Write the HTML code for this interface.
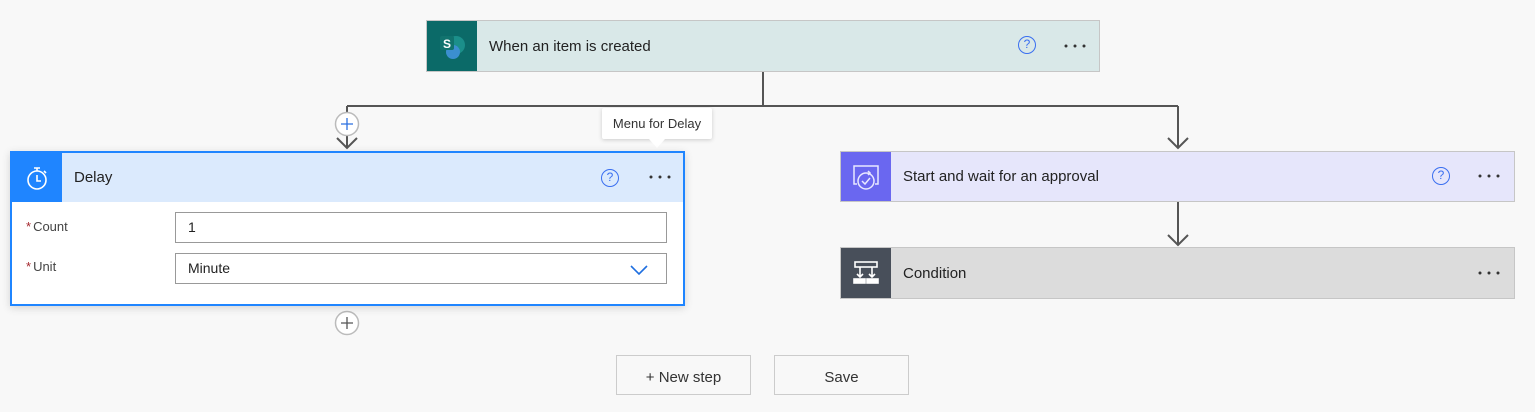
<!DOCTYPE html>
<html><head><meta charset="utf-8"><style>
*{box-sizing:border-box;margin:0;padding:0}
body{width:1535px;height:412px;background:#f8f8f8;font-family:"Segoe UI","Liberation Sans",sans-serif;position:relative;overflow:hidden;color:#222}
.card{position:absolute;display:flex;align-items:center}
.ico{width:50px;height:100%;display:flex;align-items:center;justify-content:center;flex:none}
.t{font-size:15px;margin-left:12px;flex:1}
.q{position:absolute;width:18px;height:18px;border:1.3px solid #3a6ff0;border-radius:50%;color:#3a6ff0;font-size:12px;text-align:center;line-height:15px}
.dots{position:absolute;width:24px;height:4px}
.inp{position:absolute;left:175px;width:492px;height:31px;border:1px solid #999;background:#fff;font-size:14px;padding-left:12px;line-height:29px}
.lbl{position:absolute;left:26px;font-size:13px;color:#444}
.lbl b{color:#a4262c;font-weight:normal;margin-right:2px}
.btn{position:absolute;top:355px;width:135px;height:40px;border:1px solid #ccc;background:#f8f8f8;font-size:15px;text-align:center;line-height:43px;color:#333}
</style></head><body>
<svg width="1535" height="412" style="position:absolute;left:0;top:0">
<g stroke="#555" stroke-width="2" fill="none">
<path d="M763 71V106M347 106H1178M347 106V148M1178 106V148M1178 201V245"/>
<path d="M337 138l10 10 10-10M1168 138l10 10 10-10M1168 235l10 10 10-10"/>
</g>
<circle cx="347" cy="124" r="11.5" fill="#fff" stroke="#bbb" stroke-width="1.5"/>
<path d="M341 124h12M347 118v12" stroke="#2b6fe0" stroke-width="1.3"/>
<circle cx="347" cy="323" r="11.5" fill="#fff" stroke="#bbb" stroke-width="1.5"/>
<path d="M341 323h12M347 317v12" stroke="#555" stroke-width="1.3"/>
</svg>

<div class="card" style="left:426px;top:20px;width:674px;height:52px;background:#d9e8e8;border:1px solid #c6c6c6">
<div class="ico" style="background:#0b6a68"><svg width="36" height="36" viewBox="0 0 36 36"><circle cx="22" cy="17" r="9" fill="#1b8f8a"/><circle cx="19" cy="24" r="7" fill="#3b8fd0"/><rect x="6" y="8" width="14" height="14" rx="2" fill="#11736e"/><text x="9" y="20" font-size="12" font-weight="bold" fill="#fff" font-family="Liberation Sans">S</text></svg></div>
<div class="t">When an item is created</div>
<div class="q" style="left:591px;top:15px">?</div>
<svg class="dots" style="left:636px;top:23px"><circle cx="3" cy="2" r="1.5" fill="#333"/><circle cx="12" cy="2" r="1.5" fill="#333"/><circle cx="21" cy="2" r="1.5" fill="#333"/></svg>
</div>

<div style="position:absolute;left:602px;top:108px;width:110px;height:31px;background:#fff;box-shadow:0 1px 4px rgba(0,0,0,.18);font-size:13px;color:#333;text-align:center;line-height:31px;border-radius:2px">Menu for Delay</div>
<div style="position:absolute;left:649px;top:139px;width:0;height:0;border-left:8px solid transparent;border-right:8px solid transparent;border-top:9px solid #fff"></div>

<div style="position:absolute;left:10px;top:151px;width:675px;height:155px;border:2px solid #1f85ff;background:#fff;box-shadow:0 2px 8px rgba(0,0,0,.15)">
<div class="card" style="left:0;top:0;width:671px;height:49px;background:#dbeafd">
<div class="ico" style="background:#1f85ff"><svg width="26" height="26" viewBox="0 0 26 26" fill="none" stroke="#fff" stroke-width="1.6"><circle cx="13" cy="15" r="9"/><path d="M10 3h6M13 3v3M13 10v6h4M20 6l2 2"/></svg></div>
<div class="t">Delay</div>
<div class="q" style="left:589px;top:16px">?</div>
<svg class="dots" style="left:636px;top:22px"><circle cx="3" cy="2" r="1.5" fill="#333"/><circle cx="12" cy="2" r="1.5" fill="#333"/><circle cx="21" cy="2" r="1.5" fill="#333"/></svg>
</div>
<div class="lbl" style="top:66px;left:14px"><b>*</b>Count</div>
<div class="inp" style="top:59px;left:163px">1</div>
<div class="lbl" style="top:106px;left:14px"><b>*</b>Unit</div>
<div class="inp" style="top:100px;left:163px">Minute<svg style="position:absolute;right:18px;top:11px" width="18" height="10"><path d="M1 1l8 8 8-8" stroke="#1f6fe0" stroke-width="1.6" fill="none"/></svg></div>
</div>

<div class="card" style="left:840px;top:151px;width:675px;height:51px;background:#e6e6fb;border:1px solid #c6c6c6">
<div class="ico" style="background:#6a67f0"><svg width="34" height="34" viewBox="0 0 34 34" fill="none" stroke="#e8e8ff" stroke-width="1.5"><path d="M8 24H5V6h24v18h-3"/><circle cx="17" cy="21" r="8"/><path d="M13 21l3 3 5-6"/><path d="M19 11l2 2-2 2"/></svg></div>
<div class="t">Start and wait for an approval</div>
<div class="q" style="left:591px;top:15px">?</div>
<svg class="dots" style="left:636px;top:22px"><circle cx="3" cy="2" r="1.5" fill="#333"/><circle cx="12" cy="2" r="1.5" fill="#333"/><circle cx="21" cy="2" r="1.5" fill="#333"/></svg>
</div>

<div class="card" style="left:840px;top:247px;width:675px;height:52px;background:#dcdcdc;border:1px solid #c6c6c6">
<div class="ico" style="background:#484f5a"><svg width="28" height="28" viewBox="0 0 28 28" fill="none" stroke="#fff" stroke-width="1.6"><rect x="3" y="3" width="22" height="5"/><path d="M8 8v10M20 8v10M5 15l3 3 3-3M17 15l3 3 3-3"/><rect x="2" y="20" width="11" height="4" fill="#fff"/><rect x="15" y="20" width="11" height="4" fill="#fff"/></svg></div>
<div class="t">Condition</div>
<svg class="dots" style="left:636px;top:23px"><circle cx="3" cy="2" r="1.5" fill="#333"/><circle cx="12" cy="2" r="1.5" fill="#333"/><circle cx="21" cy="2" r="1.5" fill="#333"/></svg>
</div>

<div class="btn" style="left:616px">+ New step</div>
<div class="btn" style="left:774px">Save</div>
</body></html>
